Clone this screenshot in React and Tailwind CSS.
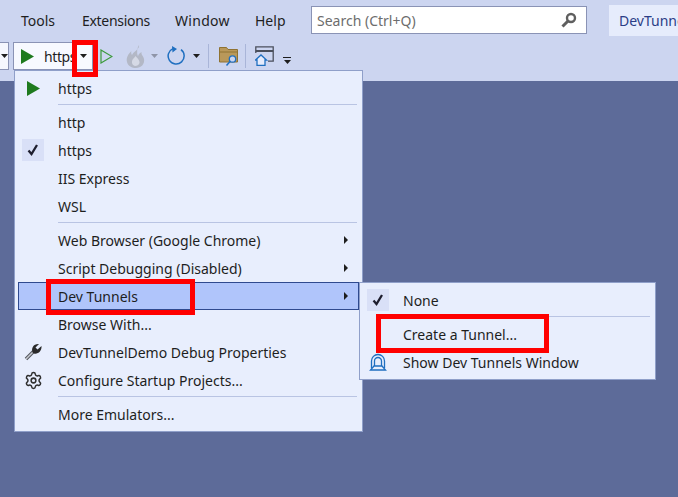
import React from 'react';
import { Settings } from 'lucide-react';

const Play = ({ className = 'w-[13px] h-[15px]' }) => (
  <svg viewBox="0 0 13 15" className={className}>
    <path d="M0 0 L13 7.5 L0 15 Z" fill="#1e7a1e" />
  </svg>
);

const Caret = ({ color = '#1e1e1e' }) => (
  <svg viewBox="0 0 7 4" className="w-[7px] h-[4px]">
    <path d="M0 0 H7 L3.5 4 Z" fill={color} />
  </svg>
);

const Check = () => (
  <svg viewBox="0 0 12 12" className="w-3 h-3">
    <path d="M1.5 6.5 L4.5 10 L10 1" fill="none" stroke="#1e1e2e" strokeWidth="2.3" />
  </svg>
);

const Item = ({ icon, checked, arrow, children }) => (
  <div className="flex items-center h-7 pl-[4px] pr-[6px]">
    <div className={`flex items-center justify-center w-[22px] h-[22px] ${checked ? 'bg-[#d9e0f7]' : ''}`}>{icon}</div>
    <div className="ml-[14px] flex-1 whitespace-nowrap">{children}</div>
    {arrow && (
      <svg viewBox="0 0 4 8" className="w-1 h-2 mr-[5px]">
        <path d="M0 0 L4 4 L0 8 Z" fill="#1e1e1e" />
      </svg>
    )}
  </div>
);

const Sep = () => (
  <div className="h-[6px] pt-[2px] ml-[40px] mr-[2px]">
    <div className="h-px w-full bg-[#b9c4e3]" />
  </div>
);

const RedBox = ({ className }) => <div className={`absolute border-[5px] border-[#ff0000] ${className}`} />;

export default function App() {
  return (
    <div className="relative w-[678px] h-[497px] overflow-hidden bg-[#5d6b99] text-[#1e1e1e] text-[14px] font-['Noto_Sans',sans-serif]">
      {/* title and menu bar */}
      <div className="bg-[#ccd5f0] h-[81px]">
        <div className="flex items-center h-[40px]">
          <div className="flex ml-[21px] w-[290px]">
            <span className="w-[61px]">Tools</span>
            <span className="w-[93px] tracking-[-0.3px]">Extensions</span>
            <span className="w-[80px] tracking-[0.3px]">Window</span>
            <span>Help</span>
          </div>
          <div className="flex items-center justify-between w-[276px] h-[28px] bg-white border border-[#8a93b5] pl-[5px] pr-[9px] text-[#6d6d6d]">
            <span>Search (Ctrl+Q)</span>
            <svg viewBox="0 0 16 16" className="w-4 h-4">
              <circle cx="10" cy="6" r="4" fill="none" stroke="#5f5f5f" strokeWidth="2.4" />
              <path d="M7 9 L1.5 14.5" stroke="#5f5f5f" strokeWidth="3" />
            </svg>
          </div>
          <div className="ml-[22px] flex-1 h-[31px] bg-[#e6ecfc] pl-[10px] flex items-center text-[#2b3d87] overflow-hidden whitespace-nowrap">DevTunnelDemo</div>
        </div>
        {/* toolbar */}
        <div className="flex items-center h-[30px] mt-[1px]">
          <div className="w-[9px] h-[28px] bg-[#f5f7fe] border border-[#8a93b5] border-l-0 flex items-center justify-end">
            <Caret />
          </div>
          <div className="ml-[4px] flex items-center w-[80px] h-[28px] bg-[#f7f9ff] border border-[#8a93b5] pl-[7px]">
            <Play />
            <span className="ml-[10px] w-[36px] overflow-hidden tracking-[-0.4px]">https</span>
            <Caret />
          </div>
          <svg viewBox="0 0 13 15" className="ml-[7px] w-[13px] h-[15px]">
            <path d="M1 1 L12 7.5 L1 14 Z" fill="none" stroke="#3c9a3c" strokeWidth="1.2" />
          </svg>
          <svg viewBox="0 0 19 23" className="ml-[13px] w-[19px] h-[23px]">
            <path d="M13 0 C14 4 8 6 6 10 C5 8.5 5 7 5.5 6 C2 9 0 13 1 17 C2 21 6 23 10 23 C15 23 19 19 18 14 C17.5 11 15 10 15.5 7 C13.5 8 12 10 12 11.5 C10.5 8 11 3 13 0 Z" fill="#b3b8c6" />
            <path d="M9 21 C6 20 5 17 7 14 C8 13 9 12 9.5 11 C11 13 14 15 13.5 18 C13 20 11 21 9 21 Z" fill="#d5d9e5" />
          </svg>
          <div className="ml-[6px]"><Caret color="#8f95a8" /></div>
          <svg viewBox="0 0 19 20" className="ml-[9px] w-[19px] h-5">
            <path d="M14 3.6 A8 8 0 1 1 6 2.6" fill="none" stroke="#1f6fc0" strokeWidth="1.5" />
            <path d="M5 0 L10 3 L5.5 6.5 Z" fill="#1f6fc0" />
          </svg>
          <div className="ml-[7px]"><Caret /></div>
          <div className="ml-[8px] w-px h-[24px] bg-[#a9b5d8]" />
          <svg viewBox="0 0 19 20" className="ml-[10px] w-[19px] h-5">
            <path d="M0.5 1.5 H7.5 L9 3.5 H18.5 V16 H0.5 Z" fill="#b9985a" stroke="#8f7232" />
            <path d="M1 6 H18" stroke="#8f7232" />
            <circle cx="13.5" cy="13" r="3.2" fill="#ccd5f0" stroke="#1f6fc0" strokeWidth="1.3" />
            <path d="M11 15.5 L7.5 19.5" stroke="#1f6fc0" strokeWidth="1.5" />
          </svg>
          <div className="ml-[7px] w-px h-[24px] bg-[#a9b5d8]" />
          <svg viewBox="0 0 19 20" className="ml-[9px] w-[19px] h-5">
            <path d="M0.8 7 V0.8 H18.2 V15.2 H13" fill="none" stroke="#4a4f5c" strokeWidth="1.3" />
            <path d="M0.8 5 H18.2" stroke="#4a4f5c" strokeWidth="2" />
            <path d="M0.5 14 L6 9 L11.5 14 H10 V19.5 H2 V14 Z" fill="#e6ecfc" stroke="#1f6fc0" strokeWidth="1.3" />
          </svg>
          <div className="ml-[9px] mt-[9px] flex flex-col items-center gap-[2px]">
            <div className="w-[8px] h-px bg-[#1e1e1e]" />
            <Caret />
          </div>
        </div>
      </div>

      {/* start dropdown menu */}
      <div className="absolute left-[14px] top-[70px] w-[349px] h-[362px] bg-[#e8eefd] border border-[#8f9fc9] pt-[3px] px-[3px]">
        <Item icon={<Play />}>https</Item>
        <Sep />
        <Item>http</Item>
        <Item checked icon={<Check />}>https</Item>
        <Item>IIS Express</Item>
        <Item>WSL</Item>
        <Sep />
        <Item arrow>Web Browser (Google Chrome)</Item>
        <Item arrow>Script Debugging (Disabled)</Item>
        <div className="bg-[#b0c5fb] outline outline-[#2f4a8f] -outline-offset-1">
          <Item arrow>Dev Tunnels</Item>
        </div>
        <Item>Browse With...</Item>
        <Item
          icon={
            <svg viewBox="0 0 18 18" className="w-[18px] h-[18px]">
              <path d="M2 16 L9.5 8.5" stroke="#55585f" strokeWidth="3.6" />
              <path d="M2 16 L9.5 8.5" stroke="#c9ccd4" strokeWidth="1.4" />
              <path d="M8.5 9.5 C7 5 9.5 0.5 15 1 L11.5 4.5 L13.5 6.5 L17.5 3 C18 8 14 11.5 10 10.5 Z" fill="#2a2a2a" />
            </svg>
          }
        >
          DevTunnelDemo Debug Properties
        </Item>
        <Item icon={<Settings size={19} strokeWidth={1.9} color="#2f2f2f" />}>
          Configure Startup Projects...
        </Item>
        <Sep />
        <Item>More Emulators...</Item>
      </div>

      {/* dev tunnels submenu */}
      <div className="absolute left-[359px] top-[282px] w-[297px] h-[98px] bg-[#e8eefd] border border-[#8f9fc9] pt-[3px] px-[3px]">
        <Item checked icon={<Check />}>None</Item>
        <Sep />
        <Item>Create a Tunnel...</Item>
        <Item
          icon={
            <svg viewBox="0 0 18 18" className="w-[18px] h-[18px]">
              <path d="M2.5 15 V8 A6.5 6.5 0 0 1 15.5 8 V15" fill="none" stroke="#1f6fc0" strokeWidth="1.3" />
              <path d="M5.5 13 V8 A3.5 3.5 0 0 1 12.5 8 V13" fill="none" stroke="#1f6fc0" strokeWidth="1.3" />
              <path d="M1.5 17 H16.5 L13 13 H5 Z" fill="none" stroke="#1f6fc0" strokeWidth="1.3" />
            </svg>
          }
        >
          Show Dev Tunnels Window
        </Item>
      </div>

      {/* red callouts */}
      <RedBox className="left-[72px] top-[40px] w-[26px] h-[37px]" />
      <RedBox className="left-[46px] top-[279px] w-[149px] h-[36px]" />
      <RedBox className="left-[376px] top-[314px] w-[173px] h-[39px]" />
    </div>
  );
}
